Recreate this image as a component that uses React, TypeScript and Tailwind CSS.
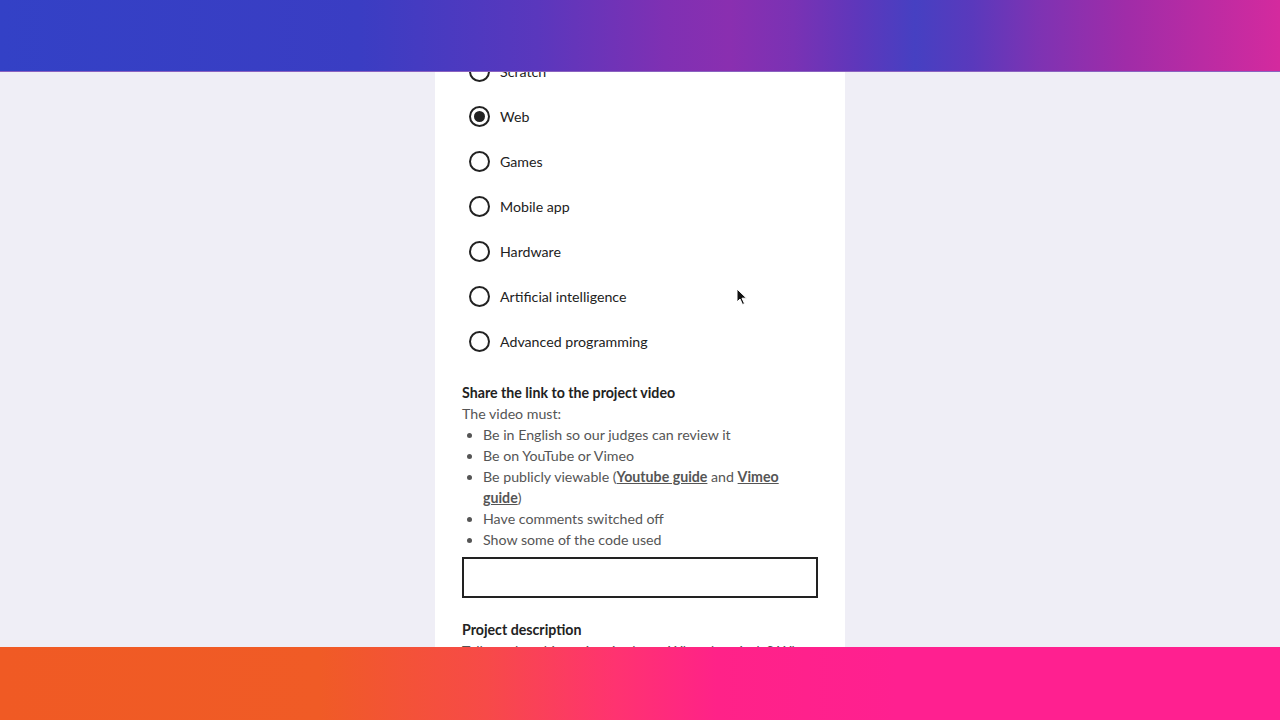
import React from "react";

const options = [
  { label: "Scratch", checked: false },
  { label: "Web", checked: true },
  { label: "Games", checked: false },
  { label: "Mobile app", checked: false },
  { label: "Hardware", checked: false },
  { label: "Artificial intelligence", checked: false },
  { label: "Advanced programming", checked: false },
];

function Radio({ checked }: { checked: boolean }) {
  return (
    <span className="flex h-[21px] w-[21px] shrink-0 items-center justify-center rounded-full border-2 border-[#222]">
      {checked && <span className="h-[11px] w-[11px] rounded-full bg-[#222]" />}
    </span>
  );
}

export default function App() {
  return (
    <div className="relative flex h-[720px] w-[1280px] flex-col overflow-hidden bg-[#efeef6] font-['Lato','Liberation_Sans',sans-serif]">
      <div className="z-10 h-[72px] shrink-0 border-b border-[#8a62c0] bg-[linear-gradient(90deg,#3341c6_0%,#3a3dc3_28%,#5a37bd_42%,#7f30b3_52%,#8a2fb0_57%,#7a32b4_62%,#5e37bb_67%,#4640c2_71.5%,#5a39bc_76%,#7d33b3_81%,#a02ca8_88%,#d42a9e_100%)]" />
      <div className="flex min-h-0 flex-1 justify-center overflow-hidden">
        <div className="w-[410px] bg-white px-[27px]">
          <div className="-mt-[23px]">
            {options.map((o) => (
              <div key={o.label} className="flex h-[45px] items-center pl-[7px]">
                <Radio checked={o.checked} />
                <span className="ml-[10px] text-[14.2px] text-[#222]">{o.label}</span>
              </div>
            ))}
          </div>
          <div className="mt-[18px] text-[14.2px] leading-[21px]">
            <div className="font-bold text-[#222]">Share the link to the project video</div>
            <div className="text-[#555]">The video must:</div>
            <ul className="list-disc pl-[21px] pr-[6px] text-[#555] marker:text-[#555]">
              <li>Be in English so our judges can review it</li>
              <li>Be on YouTube or Vimeo</li>
              <li>
                Be publicly viewable (<span className="font-bold underline">Youtube guide</span> and{" "}
                <span className="font-bold underline">Vimeo guide</span>)
              </li>
              <li>Have comments switched off</li>
              <li>Show some of the code used</li>
            </ul>
            <div className="mt-[7px] h-[41px] w-full border-2 border-[#222] bg-white" />
            <div className="mt-[21px] font-bold text-[#222]">Project description</div>
            <div className="text-[#555]">Tell us what this project is about. What does it do? What</div>
          </div>
        </div>
      </div>
      <div className="z-10 h-[73px] shrink-0 bg-[linear-gradient(90deg,#f05a24_0%,#f05b26_25%,#f74a48_38%,#ff3370_48%,#ff2288_56%,#ff2090_70%,#ff2090_100%)]" />
      <svg className="absolute left-[736px] top-[288px]" width="12" height="18" viewBox="0 0 12 18">
        <path d="M1 1 L1 14 L4 11 L6.5 16.5 L8.5 15.6 L6 10.2 L10.5 10.2 Z" fill="#111" stroke="#fff" strokeWidth="1" />
      </svg>
    </div>
  );
}
